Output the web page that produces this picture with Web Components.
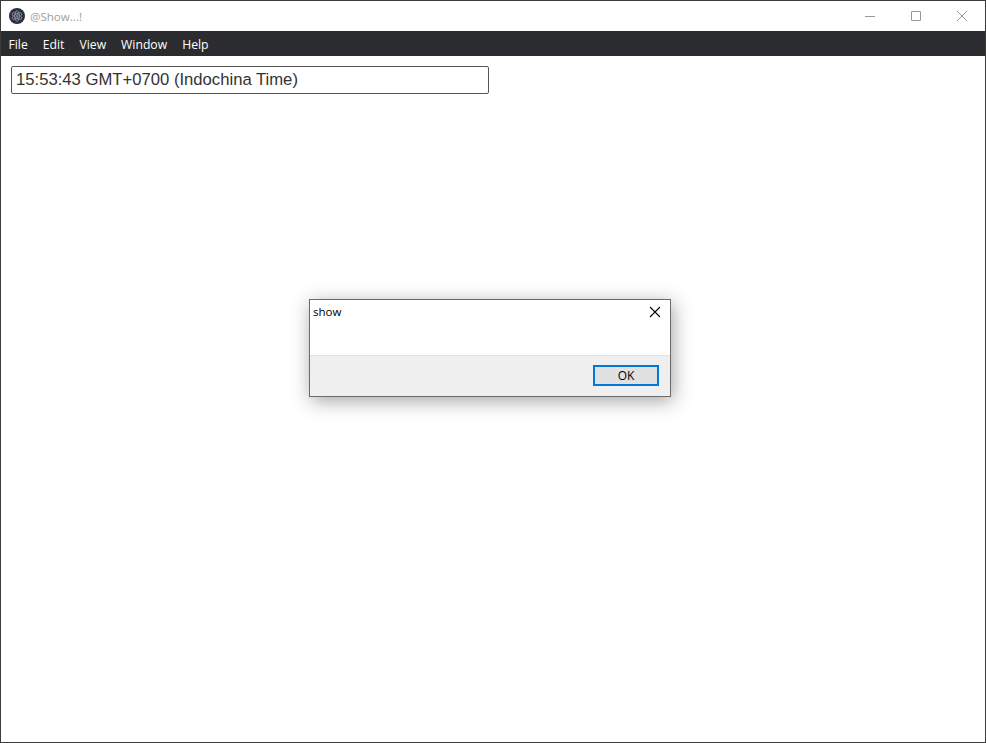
<!DOCTYPE html>
<html>
<head>
<meta charset="utf-8">
<title>@Show...!</title>
<style>
    html, body { margin: 0; padding: 0; background: #fff; }
</style>
</head>
<body>
<app-window>
    <title-bar slot="top" caption="@Show...!"></title-bar>
    <menu-bar slot="top">
        <menu-item>File</menu-item>
        <menu-item>Edit</menu-item>
        <menu-item>View</menu-item>
        <menu-item>Window</menu-item>
        <menu-item>Help</menu-item>
    </menu-bar>
    <time-box value="15:53:43 GMT+0700 (Indochina Time)"></time-box>
    <alert-dialog slot="over" message="show"></alert-dialog>
</app-window>

<script>
class AppWindow extends HTMLElement {
    constructor() {
        super();
        this.attachShadow({ mode: 'open' }).innerHTML = `
        <style>
            :host {
                display: flex;
                flex-direction: column;
                box-sizing: border-box;
                position: relative;
                width: 986px;
                height: 743px;
                border: 1px solid #3c3c3c;
                overflow: hidden;
                background: #fff;
            }
            main { flex: 1; padding: 10px; }
        </style>
        <slot name="top"></slot>
        <main><slot></slot></main>
        <slot name="over"></slot>`;
    }
}

class TitleBar extends HTMLElement {
    constructor() {
        super();
        this.attachShadow({ mode: 'open' }).innerHTML = `
        <style>
            :host {
                display: flex;
                align-items: center;
                height: 30px;
                padding-left: 8px;
                background: #fff;
                font: 11.6px "Open Sans", "Noto Sans", sans-serif;
                color: #a0a0a0;
            }
            .logo { width: 16px; height: 16px; margin-right: 5px; }
            .caption { flex: 1; }
            .ctl {
                width: 46px;
                height: 30px;
                display: flex;
                align-items: center;
                justify-content: center;
            }
            svg { display: block; }
        </style>
        <svg class="logo" viewBox="0 0 16 16">
            <circle cx="8" cy="8" r="8" fill="#2b2e3b"/>
            <g fill="none" stroke="#8f9dae" stroke-width=".8">
                <ellipse cx="8" cy="8" rx="5.4" ry="2.2" transform="rotate(30 8 8)"/>
                <ellipse cx="8" cy="8" rx="5.4" ry="2.2" transform="rotate(90 8 8)"/>
                <ellipse cx="8" cy="8" rx="5.4" ry="2.2" transform="rotate(150 8 8)"/>
            </g>
            <circle cx="8" cy="8" r="1" fill="#8f9dae"/>
        </svg>
        <span class="caption">${this.getAttribute('caption')}</span>
        <span class="ctl"><svg width="10" height="10" viewBox="0 0 10 10"><path d="M0 5.5H10" stroke="#999" fill="none"/></svg></span>
        <span class="ctl"><svg width="10" height="10" viewBox="0 0 10 10"><path d="M.5 .5H9.5V9.5H.5Z" stroke="#999" fill="none"/></svg></span>
        <span class="ctl"><svg width="10" height="10" viewBox="0 0 10 10"><path d="M0 0L10 10M10 0L0 10" stroke="#999" fill="none"/></svg></span>`;
    }
}

class MenuBar extends HTMLElement {
    constructor() {
        super();
        this.attachShadow({ mode: 'open' }).innerHTML = `
        <style>
            :host {
                display: flex;
                height: 25px;
                background: #2b2c30;
                font: 12.2px "Open Sans", "Noto Sans", sans-serif;
                color: #fff;
            }
        </style>
        <slot></slot>`;
    }
}

class MenuItem extends HTMLElement {
    constructor() {
        super();
        this.attachShadow({ mode: 'open' }).innerHTML = `
        <style>
            :host {
                display: flex;
                align-items: center;
                padding: 2px 7.5px 0;
            }
        </style>
        <slot></slot>`;
    }
}

class TimeBox extends HTMLElement {
    constructor() {
        super();
        this.attachShadow({ mode: 'open' }).innerHTML = `
        <style>
            :host { display: block; width: 478px; }
            input {
                display: block;
                box-sizing: border-box;
                width: 100%;
                height: 28px;
                padding: 0 4px;
                border: 1px solid #555;
                border-radius: 2px;
                outline: none;
                background: #fff;
                font: 16.67px "Liberation Sans", Arial, sans-serif;
                color: #333;
            }
        </style>
        <input type="text" value="${this.getAttribute('value')}">`;
    }
}

class AlertDialog extends HTMLElement {
    constructor() {
        super();
        this.attachShadow({ mode: 'open' }).innerHTML = `
        <style>
            :host {
                position: absolute;
                left: 308px;
                top: 298px;
                display: flex;
                flex-direction: column;
                box-sizing: border-box;
                width: 362px;
                height: 98px;
                border: 1px solid #6b6b6b;
                background: #fff;
                box-shadow: 2px 4px 18px rgba(0, 0, 0, .36);
                font: 12px "Open Sans", "Noto Sans", sans-serif;
                color: #000;
            }
            .body {
                flex: 1;
                display: flex;
                justify-content: space-between;
                padding: 3px 9px 0 3px;
            }
            .msg { font-size: 11.5px; margin-top: 1px; }
            .close { margin-top: 3px; }
            .foot {
                display: flex;
                justify-content: flex-end;
                align-items: flex-start;
                height: 41px;
                padding: 9px 11px 0 0;
                box-sizing: border-box;
                background: #efefef;
                border-top: 1px solid #dfdfdf;
            }
            button {
                box-sizing: border-box;
                width: 66px;
                height: 21px;
                padding: 0;
                border: 2px solid #0078d7;
                background: #e1e1e1;
                font: inherit;
                color: #000;
            }
        </style>
        <div class="body">
            <span class="msg">${this.getAttribute('message')}</span>
            <svg class="close" width="12" height="12" viewBox="0 0 12 12"><path d="M1 1L11 11M11 1L1 11" stroke="#000" stroke-width="1.1" fill="none"/></svg>
        </div>
        <div class="foot"><button>OK</button></div>`;
    }
}

customElements.define('app-window', AppWindow);
customElements.define('title-bar', TitleBar);
customElements.define('menu-bar', MenuBar);
customElements.define('menu-item', MenuItem);
customElements.define('time-box', TimeBox);
customElements.define('alert-dialog', AlertDialog);
</script>
</body>
</html>
